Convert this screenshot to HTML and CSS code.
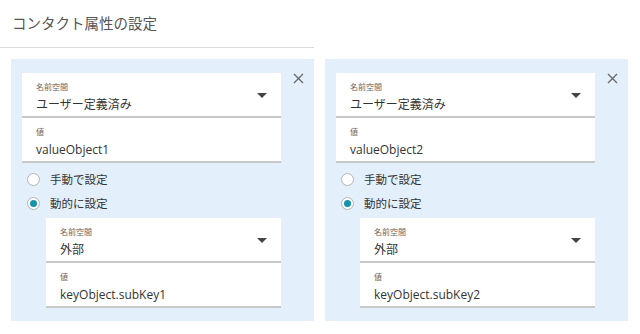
FILE: index.html
```html
<!DOCTYPE html>
<html lang="ja">
<head>
<meta charset="utf-8">
<link rel="stylesheet" href="styles.css">
</head>
<body>
<div class="header"><h1 class="title">コンタクト属性の設定</h1></div>
<div class="cards">
  <div class="card">
    <div class="main">
      <div class="field select">
        <div class="label">名前空間</div>
        <div class="value">ユーザー定義済み</div>
        <span class="arrow"></span>
      </div>
      <div class="field">
        <div class="label">値</div>
        <div class="value">valueObject1</div>
      </div>
      <div class="radios">
        <div class="radio"><span class="circle"></span><span class="rlabel">手動で設定</span></div>
        <div class="radio"><span class="circle on"></span><span class="rlabel">動的に設定</span></div>
      </div>
      <div class="sub">
        <div class="field select">
          <div class="label">名前空間</div>
          <div class="value">外部</div>
          <span class="arrow"></span>
        </div>
        <div class="field">
          <div class="label">値</div>
          <div class="value">keyObject.subKey1</div>
        </div>
      </div>
    </div>
    <div class="close"><svg width="11" height="11" viewBox="0 0 11 11"><path d="M1 1L10 10M10 1L1 10" stroke="#6a6a6a" stroke-width="1.4" fill="none"/></svg></div>
  </div>
  <div class="card">
    <div class="main">
      <div class="field select">
        <div class="label">名前空間</div>
        <div class="value">ユーザー定義済み</div>
        <span class="arrow"></span>
      </div>
      <div class="field">
        <div class="label">値</div>
        <div class="value">valueObject2</div>
      </div>
      <div class="radios">
        <div class="radio"><span class="circle"></span><span class="rlabel">手動で設定</span></div>
        <div class="radio"><span class="circle on"></span><span class="rlabel">動的に設定</span></div>
      </div>
      <div class="sub">
        <div class="field select">
          <div class="label">名前空間</div>
          <div class="value">外部</div>
          <span class="arrow"></span>
        </div>
        <div class="field">
          <div class="label">値</div>
          <div class="value">keyObject.subKey2</div>
        </div>
      </div>
    </div>
    <div class="close"><svg width="11" height="11" viewBox="0 0 11 11"><path d="M1 1L10 10M10 1L1 10" stroke="#6a6a6a" stroke-width="1.4" fill="none"/></svg></div>
  </div>
</div>
</body>
</html>
```
FILE: styles.css
```css
* { box-sizing: border-box; }
html, body { margin: 0; padding: 0; background: #fff; }
body {
  font-family: "Open Sans", "Noto Sans CJK JP", sans-serif;
  color: #333;
  width: 640px;
  height: 334px;
  overflow: hidden;
}
.header {
  width: 314px;
  height: 48px;
  border-bottom: 1px solid #dcdcdc;
  padding-left: 12px;
  display: flex;
  align-items: center;
}
.title {
  margin: 0;
  font-size: 14.5px;
  font-weight: normal;
  color: #555;
  line-height: 20px;
  padding-top: 1px;
}
.cards {
  display: flex;
  gap: 11px;
  padding: 11px 0 0 11px;
}
.card {
  width: 303px;
  background: #e3f0fc;
  display: flex;
  padding: 14px 10px 13px 11px;
}
.main {
  width: 259px;
  display: flex;
  flex-direction: column;
}
.close {
  width: 12px;
  margin-left: 11px;
  display: flex;
  justify-content: center;
}
.close svg { display: block; }
.field {
  position: relative;
  background: #fff;
  height: 45px;
  border-bottom: 2px solid #c8c8c8;
  padding: 9px 14px 0 14px;
}
.label {
  font-size: 8px;
  line-height: 10px;
  color: #666;
}
.value {
  margin-top: 4px;
  font-size: 12px;
  line-height: 17px;
  color: #333;
}
.arrow {
  position: absolute;
  right: 14px;
  top: 20px;
  width: 0;
  height: 0;
  border-left: 5px solid transparent;
  border-right: 5px solid transparent;
  border-top: 5px solid #444;
}
.radios {
  padding: 4px 0 3px 0;
}
.radio {
  height: 24px;
  display: flex;
  align-items: center;
  padding-left: 5px;
}
.circle {
  width: 13px;
  height: 13px;
  border-radius: 50%;
  border: 1px solid #b4b4b4;
  background: #fff;
  position: relative;
}
.circle.on::after {
  content: "";
  position: absolute;
  left: 2px;
  top: 2px;
  width: 7px;
  height: 7px;
  border-radius: 50%;
  background: #1494ab;
}
.rlabel {
  margin-left: 10px;
  font-size: 11.5px;
  color: #333;
}
.sub {
  margin-left: 24px;
}
```
